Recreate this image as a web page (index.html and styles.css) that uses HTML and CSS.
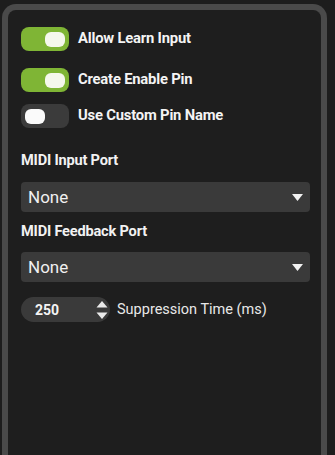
FILE: index.html
```html
<!DOCTYPE html>
<html>
<head>
<meta charset="utf-8">
<link rel="stylesheet" href="styles.css">
</head>
<body>
<div class="frame">
  <div class="panel">
    <div class="toggle-row r1">
      <div class="toggle on"><div class="knob"></div></div>
      <span class="tlabel">Allow Learn Input</span>
    </div>
    <div class="toggle-row r2">
      <div class="toggle on"><div class="knob"></div></div>
      <span class="tlabel">Create Enable Pin</span>
    </div>
    <div class="toggle-row r3">
      <div class="toggle off"><div class="knob"></div></div>
      <span class="tlabel">Use Custom Pin Name</span>
    </div>
    <div class="flabel l1">MIDI Input Port</div>
    <div class="select s1"><span>None</span><svg class="caret" width="11" height="7" viewBox="0 0 11 7"><path d="M0 0 H11 L5.5 7 Z" fill="#f2f2f2"/></svg></div>
    <div class="flabel l2">MIDI Feedback Port</div>
    <div class="select s2"><span>None</span><svg class="caret" width="11" height="7" viewBox="0 0 11 7"><path d="M0 0 H11 L5.5 7 Z" fill="#f2f2f2"/></svg></div>
    <div class="num-row">
      <div class="num">
        <span class="val">250</span>
        <svg class="spin" width="12" height="20" viewBox="0 0 12 20"><path d="M6 1 L11.5 7.5 H0.5 Z" fill="#eaeaea"/><path d="M0.5 12.5 H11.5 L6 19 Z" fill="#eaeaea"/></svg>
      </div>
      <span class="nlabel">Suppression Time (ms)</span>
    </div>
  </div>
</div>
</body>
</html>
```
FILE: styles.css
```css
html, body {
  margin: 0;
  padding: 0;
  background: #1d1d1d;
  width: 335px;
  height: 455px;
  overflow: hidden;
  font-family: Roboto, "Liberation Sans", sans-serif;
}
.frame {
  margin: 4px 8px 0 2px;
  height: 451px;
  border: 6px solid #4a4a4a;
  border-bottom: none;
  border-radius: 14px 14px 0 0;
  background: #1e1e1e;
  box-sizing: border-box;
}
.panel {
  padding: 17px 11px 0 13px;
  display: flex;
  flex-direction: column;
}
.toggle-row {
  display: flex;
  align-items: center;
  gap: 9px;
  height: 24px;
}
.r2 { margin-top: 17px; }
.r3 { margin-top: 12px; }
.toggle {
  width: 48px;
  height: 24px;
  border-radius: 8px;
  box-sizing: border-box;
  padding: 4px 4px;
  display: flex;
  align-items: center;
}
.toggle.on {
  background: #7fb535;
  justify-content: flex-end;
}
.toggle.off {
  background: #3b3b3b;
  justify-content: flex-start;
}
.knob {
  width: 20px;
  height: 15px;
  border-radius: 6px;
  background: #f5f8ec;
}
.toggle.off .knob { background: #fafafa; }
.tlabel {
  color: #f4f4f4;
  font-weight: 700;
  font-size: 14.8px;
  letter-spacing: -0.2px;
  margin-top: -2px;
}
.flabel {
  color: #f2f2f2;
  font-weight: 700;
  font-size: 14.6px;
  line-height: 20px;
  height: 20px;
  letter-spacing: -0.2px;
}
.l1 { margin-top: 22px; }
.l2 { margin-top: 9px; }
.select {
  height: 30px;
  background: #3a3a3a;
  border-radius: 4px;
  display: flex;
  align-items: center;
  justify-content: space-between;
  padding: 0 7px 0 7px;
  color: #f0f0f0;
  font-size: 17px;
}
.s1 { margin-top: 12px; }
.s2 { margin-top: 11px; }
.caret { margin-top: 1px; }
.num-row {
  margin-top: 15px;
  display: flex;
  align-items: center;
  gap: 7px;
}
.num {
  width: 89px;
  height: 25px;
  border-radius: 12.5px;
  background: #3a3a3a;
  box-sizing: border-box;
  padding: 0 2px 0 14px;
  display: flex;
  align-items: center;
  justify-content: space-between;
}
.val {
  color: #f4f4f4;
  font-weight: 700;
  font-size: 14px;
}
.nlabel {
  color: #e8e8e8;
  font-size: 14.5px;
}
```
